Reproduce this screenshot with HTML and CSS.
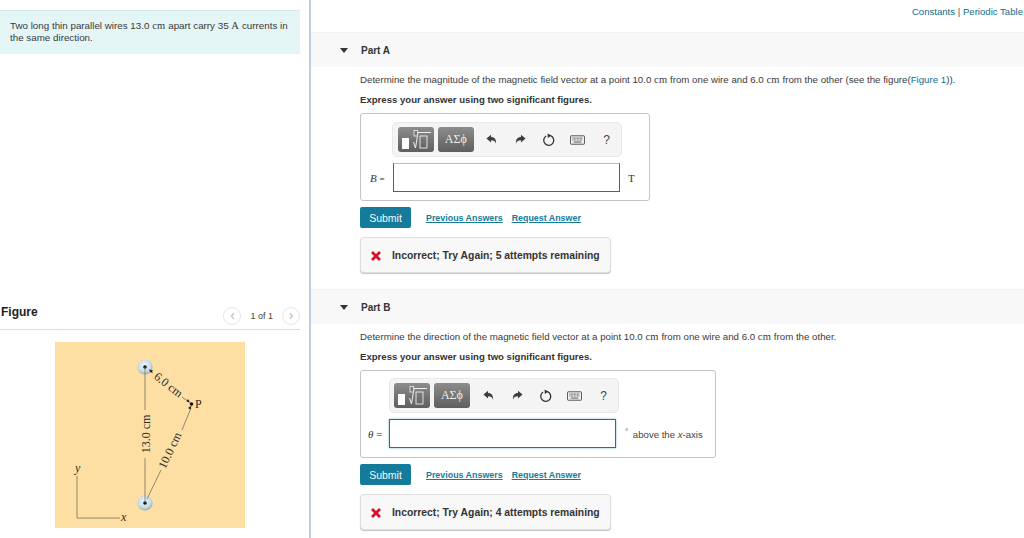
FILE: index.html
```html
<!DOCTYPE html>
<html lang="en">
<head>
<meta charset="utf-8">
<title>Magnetic field of parallel wires</title>
<link rel="stylesheet" href="styles.css">
</head>
<body>
<svg class="defs" width="0" height="0" aria-hidden="true">
  <defs>
    <symbol id="undo" viewBox="0 0 12 12"><path d="M0.5 5 L5.5 0.8 V3.4 C9 3.4 11.3 5.6 11 10.6 C10 7.8 8.4 6.8 5.5 6.8 V9.2 Z" fill="#3a3f45"/></symbol>
    <symbol id="redo" viewBox="0 0 12 12"><path d="M11.5 5 L6.5 0.8 V3.4 C3 3.4 0.7 5.6 1 10.6 C2 7.8 3.6 6.8 6.5 6.8 V9.2 Z" fill="#3a3f45"/></symbol>
    <symbol id="reset" viewBox="0 0 14 14"><path d="M8.4 2.6 A5 5 0 1 1 4.2 3" fill="none" stroke="#2f3338" stroke-width="1.3"/><path d="M5.6 0.4 L9.4 2.6 L5.8 5 Z" fill="#2f3338"/></symbol>
    <symbol id="kbd" viewBox="0 0 16 10"><rect x="0.5" y="0.5" width="15" height="9" rx="0.8" fill="#eef0f1" stroke="#4a4e52"/><path d="M2.5 3h11M2.5 5h11" stroke="#5b6065" stroke-width="1.1" stroke-dasharray="1 .6"/><path d="M4 7.2h8" stroke="#5b6065" stroke-width="1.1"/></symbol>
    <symbol id="cross" viewBox="0 0 12 12"><path d="M1 3 L3 1 L6 4 L9 1 L11 3 L8 6 L11 9 L9 11 L6 8 L3 11 L1 9 L4 6 Z" fill="#d8102c"/></symbol>
    <symbol id="templates" viewBox="0 0 36 24"><rect x="4" y="10" width="7" height="11" fill="#fff"/><path d="M15.5 14 L17.5 20 L20 4.5 H33" fill="none" stroke="#eee" stroke-width="1"/><rect x="16" y="2.5" width="3.6" height="5.5" fill="#777" stroke="#eee" stroke-width=".8"/><rect x="22" y="8" width="7" height="12" fill="none" stroke="#eee" stroke-width=".9"/></symbol>
  </defs>
</svg>
<div class="page">
  <aside class="left">
    <div class="intro">Two long thin parallel wires 13.0 <span class="math">cm</span> apart carry 35 <span class="math">A</span> currents in the same direction.</div>
    <div class="fig-head">
      <h2 class="fig-title">Figure</h2>
      <div class="pager">
        <span class="pager-btn">&#x2039;</span>
        <span class="pager-text">1 of 1</span>
        <span class="pager-btn">&#x203A;</span>
      </div>
    </div>
    <svg class="figure" width="190" height="186" viewBox="0 0 190 186" role="img" aria-label="Two wires 13.0 cm apart and point P">
      <defs>
        <radialGradient id="wire" cx="45%" cy="40%" r="60%"><stop offset="0" stop-color="#f2f7f8"/><stop offset="0.7" stop-color="#c5dbe6"/><stop offset="1" stop-color="#93a9b5"/></radialGradient>
      </defs>
      <rect width="190" height="186" fill="#fddfa4"/>
      <circle cx="90" cy="25" r="7.6" fill="url(#wire)"/>
      <circle cx="90" cy="161" r="7.6" fill="url(#wire)"/>
      <circle cx="90" cy="25" r="1.8" fill="#111"/>
      <circle cx="90" cy="161" r="1.8" fill="#111"/>
      <circle cx="136.5" cy="62" r="1.8" fill="#111"/>
      <g stroke="#77705f" stroke-width="0.8" fill="none">
        <path d="M90 25 V68"/><path d="M90 116 V161"/>
        <path d="M92 157 L106 128"/><path d="M127 88 L136 66"/>
        <path d="M95 29 L98 31"/><path d="M127 55 L134 60"/>
        <path d="M22 134 V176 H65"/>
      </g>
      <g fill="#1c1c1c">
        <path d="M94 27.5 L98 28.5 L96 31 Z"/><path d="M135 60.5 L131.5 59.5 L133 57 Z"/>
        <path d="M136.5 63.5 L135.5 67.5 L133 66 Z"/>
      </g>
      <g class="fig-text">
        <text class="mid" transform="translate(94.5 92) rotate(-90)">13.0 cm</text>
        <text class="mid" transform="translate(118.5 110) rotate(-65)">10.0 cm</text>
        <text class="mid" transform="translate(111 46) rotate(38)">6.0 cm</text>
        <text x="140" y="66">P</text>
        <text class="ital" x="20" y="130">y</text>
        <text class="ital" x="66" y="179">x</text>
      </g>
    </svg>
  </aside>
  <main class="right">
    <div class="top-links"><a class="link">Constants</a> | <a class="link">Periodic Table</a></div>

    <section class="part">
      <h3 class="part-bar"><span class="caret"></span>Part A</h3>
      <div class="part-body">
        <p class="q">Determine the magnitude of the magnetic field vector at a point 10.0 <span class="math">cm</span> from one wire and 6.0 <span class="math">cm</span> from the other (see the figure(<a class="link">Figure 1</a>)).</p>
        <p class="hint">Express your answer using two significant figures.</p>
        <div class="answer answer-a">
          <div class="toolbar">
            <span class="tool"><svg width="36" height="24"><use href="#templates"/></svg></span>
            <span class="tool greek">ΑΣϕ</span>
            <span class="ico"><svg width="11" height="11"><use href="#undo"/></svg></span>
            <span class="ico"><svg width="11" height="11"><use href="#redo"/></svg></span>
            <span class="ico"><svg width="14" height="14"><use href="#reset"/></svg></span>
            <span class="ico"><svg width="15" height="10"><use href="#kbd"/></svg></span>
            <span class="ico help">?</span>
          </div>
          <div class="entry">
            <span class="var"><i>B</i> <small>=</small></span>
            <span class="field"></span>
            <span class="unit">T</span>
          </div>
        </div>
        <div class="actions">
          <span class="submit">Submit</span>
          <a class="action-link">Previous Answers</a>
          <a class="action-link">Request Answer</a>
        </div>
        <div class="alert"><svg class="x" width="12" height="12"><use href="#cross"/></svg>Incorrect; Try Again; 5 attempts remaining</div>
      </div>
    </section>

    <section class="part part-b">
      <h3 class="part-bar"><span class="caret"></span>Part B</h3>
      <div class="part-body">
        <p class="q">Determine the direction of the magnetic field vector at a point 10.0 <span class="math">cm</span> from one wire and 6.0 <span class="math">cm</span> from the other.</p>
        <p class="hint">Express your answer using two significant figures.</p>
        <div class="answer answer-b">
          <div class="toolbar">
            <span class="tool"><svg width="36" height="24"><use href="#templates"/></svg></span>
            <span class="tool greek">ΑΣϕ</span>
            <span class="ico"><svg width="11" height="11"><use href="#undo"/></svg></span>
            <span class="ico"><svg width="11" height="11"><use href="#redo"/></svg></span>
            <span class="ico"><svg width="14" height="14"><use href="#reset"/></svg></span>
            <span class="ico"><svg width="15" height="10"><use href="#kbd"/></svg></span>
            <span class="ico help">?</span>
          </div>
          <div class="entry">
            <span class="var"><i>θ</i> =</span>
            <span class="field"></span>
            <span class="unit-text"><sup>°</sup> above the <i>x</i>-axis</span>
          </div>
        </div>
        <div class="actions">
          <span class="submit">Submit</span>
          <a class="action-link">Previous Answers</a>
          <a class="action-link">Request Answer</a>
        </div>
        <div class="alert"><svg class="x" width="12" height="12"><use href="#cross"/></svg>Incorrect; Try Again; 4 attempts remaining</div>
      </div>
    </section>
  </main>
</div>
</body>
</html>
```
FILE: styles.css
```css
* { box-sizing: border-box; }
html, body { margin: 0; height: 538px; overflow: hidden; background: #fff; }
body { font-family: "Liberation Sans", Arial, sans-serif; font-size: 9.8px; color: #333; }
.defs { position: absolute; }
.page { display: flex; height: 538px; }

.left { width: 311px; flex: none; height: 538px; padding: 10px 9px 0 0; border-right: 2px solid #bccde0; }
.intro { height: 44px; padding: 9px 10px 0; background: #e4f5f5; border-top: 1px solid #dbe8e8; line-height: 12px; color: #3a3a3a; }
.math { font-family: "Liberation Serif", serif; font-size: 10.5px; letter-spacing: 0.25px; }
.fig-head { display: flex; justify-content: space-between; align-items: center; height: 30px; margin-top: 246px; border-bottom: 1px solid #dcdfe2; }
.fig-title { margin: 0 0 6px 1px; font-size: 12px; font-weight: bold; color: #222; }
.pager { display: flex; align-items: center; gap: 9px; margin-top: 3px; }
.pager-btn { width: 18px; height: 18px; display: flex; align-items: center; justify-content: center; padding-bottom: 2px; border: 1px solid #e6e6e6; border-radius: 50%; font-size: 14px; color: #b5b5b5; }
.pager-text { font-size: 9px; color: #444; }
.figure { display: block; margin: 12px 0 0 55px; }
.fig-text text { font-family: "Liberation Serif", serif; font-size: 12px; fill: #2a2a2a; }
.fig-text .mid { text-anchor: middle; }
.fig-text .ital { font-style: italic; }

.right { flex: 1; min-width: 0; }
.top-links { height: 32px; padding: 6px 1px 0 0; text-align: right; font-size: 9.6px; color: #555; }
.link { color: #0f6d8a; }
.part-bar { display: flex; align-items: center; height: 35px; margin: 0; padding-left: 29px; background: #f8f8f8; border-top: 1px solid #f2f2f2; font-size: 10px; font-weight: bold; color: #333; }
.caret { width: 0; height: 0; margin-right: 13px; border-left: 4.5px solid transparent; border-right: 4.5px solid transparent; border-top: 5px solid #333; }
.part-body { padding-left: 49px; }
.q { margin: 0; padding-top: 7px; height: 21px; line-height: 12px; white-space: nowrap; font-size: 9.7px; color: #3a3a3a; }
.hint { margin: 0; padding-top: 6px; height: 25px; line-height: 12px; font-weight: bold; font-size: 9.6px; color: #333; }
.answer { border: 1px solid #c4c4c4; border-radius: 3px; height: 88px; }
.answer-a { width: 290px; padding: 8px 0 0 31px; }
.answer-b { width: 356px; padding: 7px 0 0 28px; }
.toolbar { display: flex; align-items: center; width: 230px; height: 35px; padding-left: 5px; background: #f4f4f4; border: 1px solid #e8e8e8; border-radius: 5px; }
.answer-b .toolbar { padding-left: 4px; }
.tool { display: flex; align-items: center; justify-content: center; width: 36px; height: 25px; margin-right: 4px; border-radius: 3px; background: linear-gradient(#8c8c8c, #5f5f5f); color: #eee; }
.greek { font-family: "Liberation Serif", serif; font-size: 12px; }
.ico { display: flex; justify-content: center; width: 29px; margin-left: 0; align-items: center; }
.help { font-size: 12px; color: #444; }
.entry { display: flex; align-items: center; height: 29px; margin: 6px 0 0 -26px; }
.answer-a .entry { margin-left: -24px; }
.var { width: 26px; padding-left: 3px; white-space: nowrap; font-family: "Liberation Serif", serif; font-size: 11px; color: #333; }
.answer-a .var { margin-left: -1px; }
.answer-b .var { padding-left: 5px; }
.var small { font-size: 9px; }
.field { height: 29px; width: 227px; background: #fff; border: 1px solid #0f7b9b; border-top-color: #9ac7d6; }
.answer-b .field { box-shadow: 0 0 2px #7fb9cc; border-top-color: #0f7b9b; }
.unit { margin-left: 8px; font-family: "Liberation Serif", serif; font-size: 11px; color: #333; }
.unit-text { margin-left: 9px; font-size: 9.6px; color: #444; white-space: nowrap; }
.unit-text sup { font-size: 8px; margin-right: 2px; }
.actions { display: flex; align-items: center; margin-top: 6px; height: 21px; }
.submit { display: flex; align-items: center; justify-content: center; width: 51px; height: 21px; margin-right: 15px; border-radius: 2px; background: #147b9a; color: #f2fafc; font-size: 10.5px; }
.action-link { margin-right: 9px; color: #147b9a; font-size: 8.9px; font-weight: bold; text-decoration: underline; }
.alert { display: flex; align-items: center; width: 251px; height: 36px; margin-top: 9px; padding: 1px 0 0 9px; background: #f8f8f8; border: 1px solid #dedede; border-radius: 4px; box-shadow: 0 1px 1px #c4c4c4; font-size: 10.35px; font-weight: bold; color: #333; white-space: nowrap; }
.x { margin-right: 10px; flex: none; }
.part-b { margin-top: 16px; }
```
